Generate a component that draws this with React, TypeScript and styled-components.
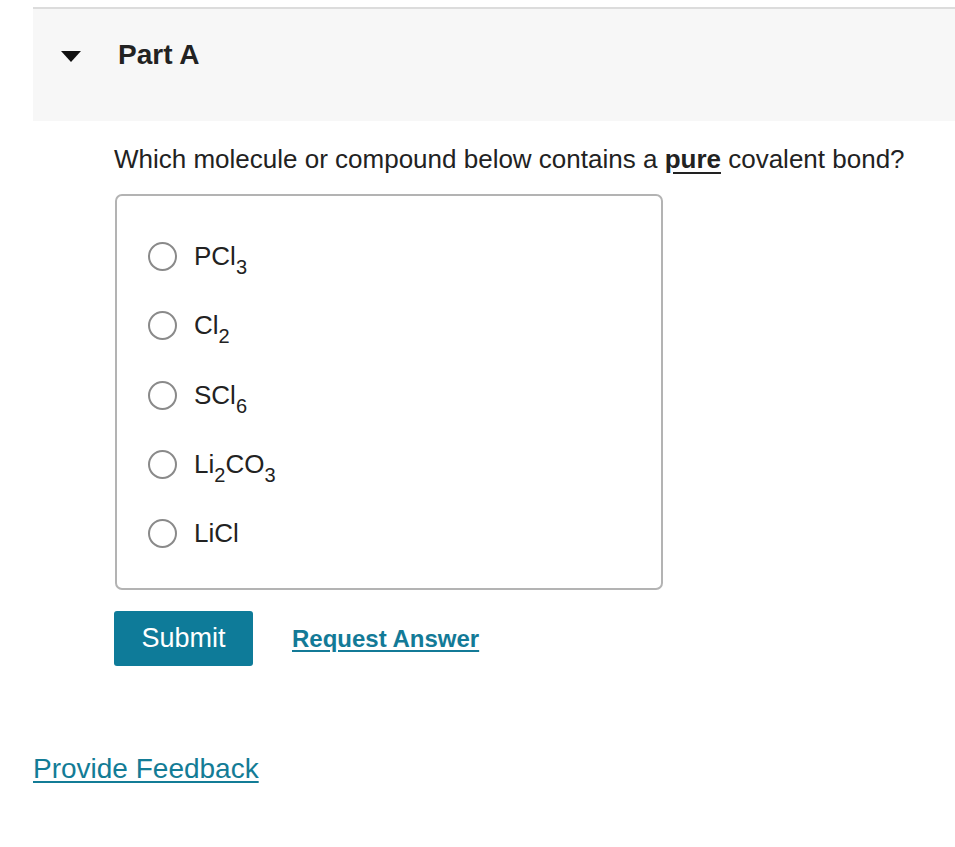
import React from "react";
import styled, { createGlobalStyle } from "styled-components";

const Global = createGlobalStyle`
  html, body { margin: 0; padding: 0; background: #fff; }
  body { font-family: "Liberation Sans", Arial, Helvetica, sans-serif; color: #222; }
`;

const Page = styled.div`
  padding: 7px 0 0 33px;
  width: 955px;
  box-sizing: border-box;
`;

const PartSection = styled.section`
  border-top: 2px solid #dcdcdc;
`;

const PartHeader = styled.div`
  display: flex;
  align-items: center;
  height: 112px;
  background: #f7f7f7;
  padding: 0 0 20px 28px;
  box-sizing: border-box;
`;

const Caret = styled.span`
  width: 0;
  height: 0;
  border-left: 10px solid transparent;
  border-right: 10px solid transparent;
  border-top: 11px solid #111;
  margin-right: 37px;
  margin-top: 2px;
`;

const PartTitle = styled.h2`
  margin: 0;
  font-size: 28px;
  font-weight: 700;
  color: #222;
`;

const Body = styled.div`
  padding: 23px 0 0 81px;
`;

const Question = styled.p`
  margin: 0;
  font-size: 26px;
  line-height: 30px;
  color: #222;
`;

const Strong = styled.strong`
  text-decoration: underline;
  text-underline-offset: 4px;
`;

const OptionBox = styled.div`
  margin: 20px 0 0 1px;
  width: 548px;
  height: 396px;
  box-sizing: border-box;
  border: 2px solid #b3b3b3;
  border-radius: 7px;
  padding: 46px 0 0 31px;
  display: flex;
  flex-direction: column;
  gap: 40.25px;
`;

const Option = styled.label`
  display: flex;
  align-items: center;
  height: 29px;
  font-size: 26px;
  color: #222;
  cursor: pointer;
`;

const Radio = styled.span`
  width: 29px;
  height: 29px;
  box-sizing: border-box;
  border: 2.5px solid #8a8a8a;
  border-radius: 50%;
  margin-right: 17px;
  flex: none;
`;

const Sub = styled.sub`
  font-size: 20px;
  vertical-align: -9px;
  line-height: 0;
`;

const Actions = styled.div`
  display: flex;
  align-items: center;
  gap: 39px;
  margin-top: 21px;
`;

const SubmitButton = styled.button`
  width: 139px;
  height: 55px;
  background: #0e7b99;
  color: #fff;
  border: none;
  border-radius: 3px;
  font-family: inherit;
  font-size: 27px;
  padding: 0;
`;

const RequestLink = styled.a`
  font-size: 24px;
  font-weight: 700;
  color: #137a97;
  text-decoration: underline;
  text-underline-offset: 3px;
`;

const Feedback = styled.a`
  display: inline-block;
  margin-top: 87px;
  font-size: 28px;
  color: #137c96;
  text-decoration: underline;
  text-underline-offset: 3px;
`;

const options: React.ReactNode[] = [
  <>PCl<Sub>3</Sub></>,
  <>Cl<Sub>2</Sub></>,
  <>SCl<Sub>6</Sub></>,
  <>Li<Sub>2</Sub>CO<Sub>3</Sub></>,
  <>LiCl</>,
];

export default function App() {
  return (
    <>
      <Global />
      <Page>
        <PartSection>
          <PartHeader>
            <Caret />
            <PartTitle>Part A</PartTitle>
          </PartHeader>
          <Body>
            <Question>
              Which molecule or compound below contains a <Strong>pure</Strong> covalent bond?
            </Question>
            <OptionBox role="radiogroup">
              {options.map((o, i) => (
                <Option key={i}>
                  <Radio />
                  <span>{o}</span>
                </Option>
              ))}
            </OptionBox>
            <Actions>
              <SubmitButton>Submit</SubmitButton>
              <RequestLink href="#">Request Answer</RequestLink>
            </Actions>
          </Body>
        </PartSection>
        <Feedback href="#">Provide Feedback</Feedback>
      </Page>
    </>
  );
}
